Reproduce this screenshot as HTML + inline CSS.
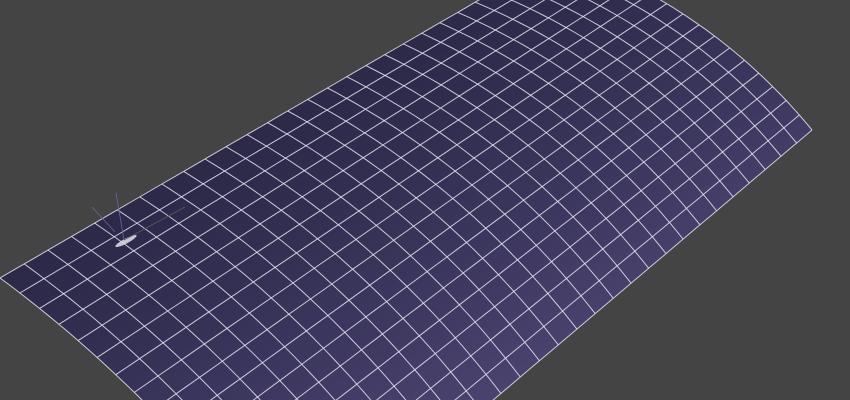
<!DOCTYPE html>
<html><head><meta charset="utf-8"><style>
html,body{margin:0;padding:0;background:#444444;overflow:hidden;width:850px;height:400px}
svg{display:block;position:absolute;left:0;top:0}
</style></head><body>
<svg id="s" width="850" height="400" viewBox="0 0 850 400" xmlns="http://www.w3.org/2000/svg">
<defs>
<linearGradient id="g" gradientUnits="userSpaceOnUse" x1="380" y1="80" x2="560" y2="390">
<stop offset="0" stop-color="#2c2949"/>
<stop offset="0.5" stop-color="#3a355c"/>
<stop offset="1" stop-color="#4c4572"/>
</linearGradient>
</defs>
<rect width="850" height="400" fill="#444444"/>
<path id="surf" fill="url(#g)" d=""/>
<g id="grid" fill="none" stroke="#e6e4f2" stroke-width="1" stroke-opacity="0.85"></g>
<ellipse cx="126" cy="241" rx="12" ry="2.5" transform="rotate(-28 126 241)" fill="#d8d6e6" opacity="0.9"/>
<line x1="124" y1="240" x2="116" y2="193" stroke="#6a64a0" stroke-width="0.8"/>
<line x1="124" y1="240" x2="185" y2="207" stroke="#5a5a60" stroke-width="0.8"/>
<line x1="115" y1="232" x2="92" y2="207" stroke="#6a64a0" stroke-width="0.8"/>
</svg>
<script>
(function(){
function q(p0,c,p1,t){var a=(1-t)*(1-t),b=2*(1-t)*t,d=t*t;return [a*p0[0]+b*c[0]+d*p1[0],a*p0[1]+b*c[1]+d*p1[1]];}
var L0=[0,278],Lc=[160,396],L1=[290,572];
var R0=[560,-47],Rc=[712,8],R1=[812,130];
var A=1.22;
function fu(u){return u*A/(1+(A-1)*u);}
function P(u,v){var w=fu(u);var l=q(L0,Lc,L1,v),r=q(R0,Rc,R1,v);return [(1-w)*l[0]+w*r[0],(1-w)*l[1]+w*r[1]];}
function f(p){return p[0].toFixed(1)+","+p[1].toFixed(1);}
var NU=28,NV=16,S=40,i,j,d;
d="M"+f(P(0,0));
for(i=1;i<=S;i++)d+="L"+f(P(i/S,0));
for(i=1;i<=S;i++)d+="L"+f(P(1,i/S));
for(i=S-1;i>=0;i--)d+="L"+f(P(i/S,1));
for(i=S-1;i>=0;i--)d+="L"+f(P(0,i/S));
d+="Z";
document.getElementById("surf").setAttribute("d",d);
var g="";
for(i=0;i<=NU;i++){var u=i/NU;d="M"+f(P(u,0));for(j=1;j<=S;j++)d+="L"+f(P(u,j/S));g+='<path d="'+d+'"/>';}
for(j=0;j<=NV;j++){var v=j/NV;d="M"+f(P(0,v));for(i=1;i<=S;i++)d+="L"+f(P(i/S,v));g+='<path d="'+d+'"/>';}
document.getElementById("grid").innerHTML=g;
})();
</script>
</body></html>
